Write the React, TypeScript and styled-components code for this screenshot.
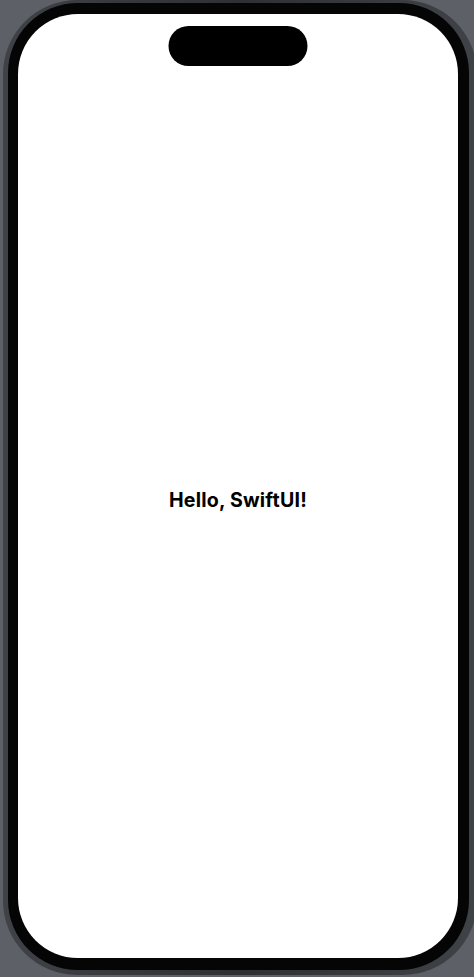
import styled, { createGlobalStyle } from "styled-components";

const GlobalStyle = createGlobalStyle`
  html, body {
    margin: 0;
    padding: 0;
    background: #5d6167;
  }
  * { box-sizing: border-box; }
`;

const Page = styled.div`
  width: 474px;
  height: 977px;
  overflow: hidden;
  background: #5d6167;
  padding-left: 3px;
`;

const Frame = styled.div`
  width: 474px;
  height: 975px;
  padding: 3px 8px 5px 5px;
  border-radius: 74px;
  background: linear-gradient(90deg, #3f4246, #2e3033 50%, #3f4246);
`;

const Bezel = styled.div`
  width: 100%;
  height: 100%;
  padding: 11px 11px 12px 10px;
  border-radius: 70px;
  background: #050505;
`;

const Screen = styled.div`
  position: relative;
  width: 100%;
  height: 100%;
  border-radius: 60px;
  background: #ffffff;
  display: flex;
  align-items: center;
  justify-content: center;
  padding-top: 28px;
`;

const Island = styled.div`
  position: absolute;
  top: 12px;
  left: 50%;
  transform: translateX(-50%);
  width: 139px;
  height: 40px;
  border-radius: 20px;
  background: #000000;
`;

const Greeting = styled.h1`
  margin: 0;
  font-family: Inter, "Liberation Sans", sans-serif;
  font-weight: 700;
  font-size: 19.6px;
  color: #000000;
  letter-spacing: 0.2px;
`;

export default function App() {
  return (
    <>
      <GlobalStyle />
      <Page>
        <Frame>
          <Bezel>
            <Screen>
              <Island />
              <Greeting>Hello, SwiftUI!</Greeting>
            </Screen>
          </Bezel>
        </Frame>
      </Page>
    </>
  );
}
